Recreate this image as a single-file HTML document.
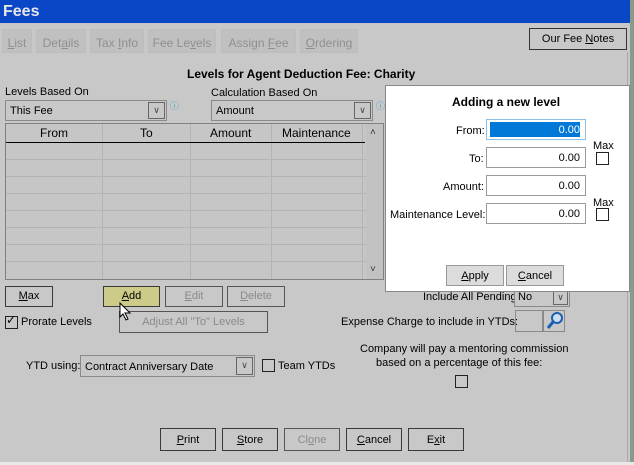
<!DOCTYPE html>
<html><head><meta charset="utf-8"><style>
*{margin:0;padding:0;box-sizing:border-box}
body{width:634px;height:465px;background:#c8c8c8;position:relative;overflow:hidden;font-family:"Liberation Sans",Arial,sans-serif;font-size:11px;color:#000}
.a{position:absolute}
.t{position:absolute;white-space:nowrap}
.btn{position:absolute;border:1px solid #3a3a3a;background:#c8c8c8;text-align:center;font-size:11px}
.dis{color:#8a8a8a;border-color:#555}
.tab{position:absolute;top:29px;height:24px;background:#c0c0c0;color:#8f8f8f;font-size:12px;line-height:26px;text-align:center;border:1px solid #bdbdbd}
.cb{position:absolute;width:13px;height:13px;border:1px solid #222;background:transparent}
.sel{position:absolute;border:1px solid #8a8a8a;background:#c8c8c8;height:21px;line-height:21px;padding-left:4px}
.dd{position:absolute;right:1px;top:1px;width:17px;height:17px;border:1px solid #666;text-align:center;font-size:9px;line-height:15px;color:#444}
.fld{position:absolute;left:486px;width:100px;height:21px;border:1px solid #9a9a9a;background:#fff;text-align:right;padding-right:5px;line-height:21px}
u{text-decoration:underline}
</style></head><body>
<div class="a" style="left:0;top:0;width:634px;height:23px;background:#0a47c6"></div>
<div class="t" style="left:3px;top:3px;color:#e8e8e8;font-weight:bold;font-size:16px">Fees</div>
<div class="a" style="left:630px;top:0;width:4px;height:465px;background:#8a9a8a"></div>
<div class="a" style="left:627px;top:52px;width:1px;height:413px;background:#a8a8a8"></div>

<div class="tab" style="left:2px;width:30px"><u>L</u>ist</div>
<div class="tab" style="left:36px;width:50px">Det<u>a</u>ils</div>
<div class="tab" style="left:90px;width:54px">Tax <u>I</u>nfo</div>
<div class="tab" style="left:148px;width:68px">Fee Le<u>v</u>els</div>
<div class="tab" style="left:221px;width:75px">Assign <u>F</u>ee</div>
<div class="tab" style="left:300px;width:58px"><u>O</u>rdering</div>
<div class="btn" style="left:529px;top:28px;width:98px;height:22px;line-height:20px;border:1px solid #333">Our Fee <u>N</u>otes</div>

<div class="t" style="left:187px;top:67px;font-weight:bold;font-size:12px">Levels for Agent Deduction Fee: Charity</div>
<div class="t" style="left:5px;top:86px">Levels Based On</div>
<div class="sel" style="left:5px;top:100px;width:162px">This Fee<div class="dd">&#8744;</div></div>
<div class="t" style="left:170px;top:99px;color:#4aa0c8;font-size:9px">ⓘ</div>
<div class="t" style="left:211px;top:87px">Calculation Based On</div>
<div class="sel" style="left:211px;top:100px;width:162px">Amount<div class="dd">&#8744;</div></div>
<div class="t" style="left:376px;top:99px;color:#4aa0c8;font-size:9px">ⓘ</div>

<div class="a" style="left:5px;top:123px;width:379px;height:157px;border:1px solid #808080;background:#c6c6c6"></div>
<svg class="a" style="left:6px;top:124px" width="360" height="155">
<g stroke="#b4b4b4" stroke-width="1">
<line x1="96.5" y1="0" x2="96.5" y2="155"/><line x1="184.5" y1="0" x2="184.5" y2="155"/><line x1="265.5" y1="0" x2="265.5" y2="155"/><line x1="356.5" y1="0" x2="356.5" y2="155"/>
<line x1="0" y1="35.5" x2="360" y2="35.5"/><line x1="0" y1="52.5" x2="360" y2="52.5"/><line x1="0" y1="69.5" x2="360" y2="69.5"/><line x1="0" y1="86.5" x2="360" y2="86.5"/><line x1="0" y1="103.5" x2="360" y2="103.5"/><line x1="0" y1="120.5" x2="360" y2="120.5"/><line x1="0" y1="137.5" x2="360" y2="137.5"/>
</g>
<line x1="0" y1="18.5" x2="359" y2="18.5" stroke="#000"/>
</svg>
<div class="t" style="left:40px;top:126px;font-size:12px">From</div>
<div class="t" style="left:140px;top:126px;font-size:12px">To</div>
<div class="t" style="left:210px;top:126px;font-size:12px">Amount</div>
<div class="t" style="left:282px;top:126px;font-size:12px">Maintenance</div>
<div class="a" style="left:366px;top:124px;width:17px;height:155px;background:#c2c2c2"></div>
<div class="t" style="left:370px;top:127px;font-size:10px;color:#333">&#708;</div>
<div class="t" style="left:370px;top:264px;font-size:10px;color:#333">&#709;</div>

<div class="btn" style="left:5px;top:286px;width:48px;height:21px;line-height:19px"><u>M</u>ax</div>
<div class="btn" style="left:103px;top:286px;width:57px;height:21px;line-height:19px;background:#cccc88"><u>A</u>dd</div>
<div class="btn dis" style="left:165px;top:286px;width:58px;height:21px;line-height:19px"><u>E</u>dit</div>
<div class="btn dis" style="left:227px;top:286px;width:58px;height:21px;line-height:19px"><u>D</u>elete</div>
<div class="cb" style="left:5px;top:316px"></div>
<div class="t" style="left:6px;top:313px;font-size:12px">&#10003;</div>
<div class="t" style="left:21px;top:316px">Prorate Levels</div>
<div class="btn dis" style="left:119px;top:311px;width:149px;height:22px;line-height:20px">Adjust All "To" Levels</div>
<svg class="a" style="left:119px;top:302px" width="14" height="20"><path d="M1 1 L1 15 L4 12 L7 18 L9 17 L6 11 L11 11 Z" fill="#fff" stroke="#000"/></svg>

<div class="t" style="left:423px;top:291px">Include All Pending:</div>
<div class="sel" style="left:514px;top:288px;width:56px;height:19px;line-height:17px;padding-left:3px">No<div class="dd" style="width:15px;height:15px;line-height:13px">&#8744;</div></div>
<div class="t" style="left:341px;top:316px">Expense Charge to include in YTDs:</div>
<div class="a" style="left:515px;top:310px;width:28px;height:22px;border:1px solid #8a8a8a"></div>
<div class="a" style="left:543px;top:310px;width:22px;height:22px;border:1px solid #8a8a8a"></div>
<svg class="a" style="left:545px;top:311px" width="20" height="20"><circle cx="12" cy="7" r="5" fill="#cde" stroke="#1a5fb4" stroke-width="2"/><line x1="8" y1="11" x2="3" y2="17" stroke="#1a5fb4" stroke-width="3"/></svg>

<div class="t" style="left:360px;top:343px">Company will pay a mentoring commission</div>
<div class="t" style="left:376px;top:357px">based on a percentage of this fee:</div>
<div class="cb" style="left:455px;top:375px"></div>

<div class="t" style="left:26px;top:360px">YTD using:</div>
<div class="sel" style="left:80px;top:355px;width:175px;height:22px;line-height:22px">Contract Anniversary Date<div class="dd" style="height:18px">&#8744;</div></div>
<div class="cb" style="left:262px;top:359px"></div>
<div class="t" style="left:278px;top:360px">Team YTDs</div>

<div class="btn" style="left:160px;top:428px;width:56px;height:23px;line-height:22px"><u>P</u>rint</div>
<div class="btn" style="left:222px;top:428px;width:56px;height:23px;line-height:22px"><u>S</u>tore</div>
<div class="btn dis" style="left:284px;top:428px;width:56px;height:23px;line-height:22px">Cl<u>o</u>ne</div>
<div class="btn" style="left:346px;top:428px;width:56px;height:23px;line-height:22px"><u>C</u>ancel</div>
<div class="btn" style="left:408px;top:428px;width:56px;height:23px;line-height:22px">E<u>x</u>it</div>
<div class="a" style="left:0;top:462px;width:634px;height:3px;background:#e8e8e8"></div>

<div class="a" style="left:385px;top:85px;width:245px;height:207px;background:#fff;border:1px solid #888"></div>
<div class="t" style="left:452px;top:95px;font-weight:bold;font-size:12px">Adding a new level</div>
<div class="t" style="left:456px;top:125px">From:</div>
<div class="a" style="left:486px;top:119px;width:100px;height:21px;border:1px solid #8fc0e8;background:#fff"></div>
<div class="a" style="left:490px;top:122px;width:90px;height:15px;background:#0078d7;color:#fff;text-align:right;line-height:16px">0.00</div>
<div class="t" style="left:469px;top:153px">To:</div>
<div class="fld" style="top:147px">0.00</div>
<div class="t" style="left:443px;top:181px">Amount:</div>
<div class="fld" style="top:175px">0.00</div>
<div class="t" style="left:390px;top:209px">Maintenance Level:</div>
<div class="fld" style="top:203px">0.00</div>
<div class="t" style="left:593px;top:140px">Max</div>
<div class="cb" style="left:596px;top:152px"></div>
<div class="t" style="left:593px;top:197px">Max</div>
<div class="cb" style="left:596px;top:208px"></div>
<div class="btn" style="left:446px;top:265px;width:58px;height:21px;line-height:20px;background:#dcdcdc;border-color:#999"><u>A</u>pply</div>
<div class="btn" style="left:506px;top:265px;width:58px;height:21px;line-height:20px;background:#dcdcdc;border-color:#999"><u>C</u>ancel</div>
</body></html>
